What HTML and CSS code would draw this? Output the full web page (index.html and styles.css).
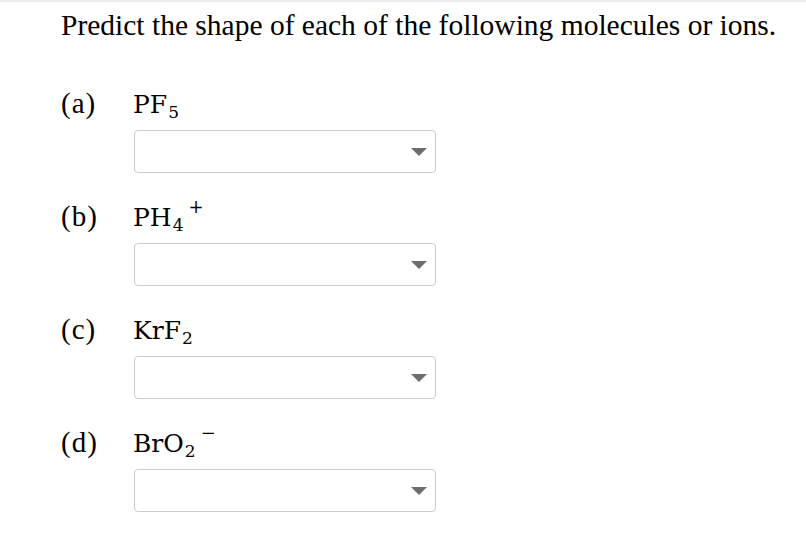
FILE: index.html
```html
<!DOCTYPE html>
<html>
<head>
<meta charset="utf-8">
<link rel="stylesheet" href="styles.css">
</head>
<body>
<div class="topline"></div>
<div class="page">
  <p class="question">Predict the shape of each of the following molecules or ions.</p>
  <div class="items">
    <div class="item">
      <div class="label"><span class="letter">(a)</span><span class="formula">PF<sub>5</sub></span></div>
      <div class="select"><span class="arrow"></span></div>
    </div>
    <div class="item">
      <div class="label"><span class="letter">(b)</span><span class="formula">PH<sub>4</sub><sup>+</sup></span></div>
      <div class="select"><span class="arrow"></span></div>
    </div>
    <div class="item">
      <div class="label"><span class="letter">(c)</span><span class="formula">KrF<sub>2</sub></span></div>
      <div class="select"><span class="arrow"></span></div>
    </div>
    <div class="item">
      <div class="label"><span class="letter">(d)</span><span class="formula">BrO<sub>2</sub><sup>&minus;</sup></span></div>
      <div class="select"><span class="arrow"></span></div>
    </div>
  </div>
</div>
</body>
</html>
```

FILE: styles.css
```css
html, body {
  margin: 0;
  padding: 0;
  background: #fff;
}
body {
  font-family: "Liberation Serif", "Times New Roman", serif;
  color: #000;
  width: 806px;
  height: 540px;
  overflow: hidden;
}
.topline {
  height: 2px;
  background: #ececec;
}
.page {
  padding-left: 61px;
}
.question {
  margin: 0;
  padding-top: 5px;
  font-size: 29.5px;
  line-height: 36px;
}
.items {
  display: flex;
  flex-direction: column;
  gap: 27px;
  margin-top: 44px;
}
.item {
  display: flex;
  flex-direction: column;
}
.label {
  display: flex;
  align-items: baseline;
  font-size: 29px;
  line-height: 32px;
  height: 32px;
}
.letter {
  width: 72px;
  letter-spacing: 1px;
}
.formula {
  font-family: "DejaVu Serif", "Liberation Serif", serif;
  font-size: 25px;
}
.formula sub {
  font-size: 17px;
  vertical-align: -5px;
  line-height: 0;
  margin-left: 1px;
}
.formula sup {
  font-size: 18px;
  vertical-align: 13px;
  line-height: 0;
  margin-left: 5px;
}
.select {
  margin-top: 11px;
  margin-left: 73px;
  width: 302px;
  height: 43px;
  box-sizing: border-box;
  border: 1px solid #cccccc;
  border-radius: 4px;
  background: #fff;
  display: flex;
  align-items: center;
  justify-content: flex-end;
  padding-right: 8px;
}
.arrow {
  width: 0;
  height: 0;
  border-left: 8px solid transparent;
  border-right: 8px solid transparent;
  border-top: 8px solid #6d6d6d;
}
```
